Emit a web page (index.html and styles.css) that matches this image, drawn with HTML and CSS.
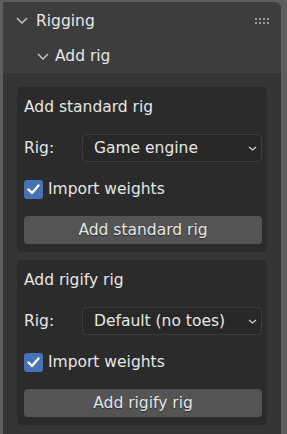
FILE: index.html
```html
<!DOCTYPE html>
<html>

<head>
    <title>Rigging</title>
    <meta charset="utf-8">
    <meta name="viewport" content="width=device-width, initial-scale=1">
    <link rel="stylesheet" href="styles.css">
</head>

<body>
<div class="panel">
    <!-- Panel header -->
    <div class="panel-head">
        <svg class="chev" width="12" height="7" viewBox="0 0 12 7"><path d="M1 1 L6 6 L11 1" fill="none" stroke="#c8c8c8" stroke-width="1.4"/></svg>
        <span class="head-title">Rigging</span>
        <svg class="grip" width="15" height="7" viewBox="0 0 15 7">
            <rect x="0" y="0" width="2" height="2"/><rect x="4" y="0" width="2" height="2"/><rect x="8" y="0" width="2" height="2"/><rect x="12" y="0" width="2" height="2"/>
            <rect x="0" y="4" width="2" height="2"/><rect x="4" y="4" width="2" height="2"/><rect x="8" y="4" width="2" height="2"/><rect x="12" y="4" width="2" height="2"/>
        </svg>
    </div>

    <!-- Sub panel -->
    <div class="sub-head">
        <svg class="chev" width="12" height="7" viewBox="0 0 12 7"><path d="M1 1 L6 6 L11 1" fill="none" stroke="#c8c8c8" stroke-width="1.4"/></svg>
        <span>Add rig</span>
    </div>

    <div class="sub-body">
        <div class="box">
            <div class="box-title">Add standard rig</div>
            <div class="prop-row">
                <span class="prop-label">Rig:</span>
                <div class="dropdown">
                    <span>Game engine</span>
                    <svg class="drop-arrow" width="9" height="5" viewBox="0 0 9 5"><path d="M1 1 L4.5 4 L8 1" fill="none" stroke="#d0d0d0" stroke-width="1.3"/></svg>
                </div>
            </div>
            <div class="check-row">
                <span class="checkbox"><svg width="19" height="19" viewBox="0 0 19 19"><path d="M4.5 9.5 L8 13 L14.5 5.5" fill="none" stroke="#fff" stroke-width="2.4" stroke-linecap="round" stroke-linejoin="round"/></svg></span>
                <span>Import weights</span>
            </div>
            <div class="button">Add standard rig</div>
        </div>

        <div class="box">
            <div class="box-title">Add rigify rig</div>
            <div class="prop-row">
                <span class="prop-label">Rig:</span>
                <div class="dropdown">
                    <span>Default (no toes)</span>
                    <svg class="drop-arrow" width="9" height="5" viewBox="0 0 9 5"><path d="M1 1 L4.5 4 L8 1" fill="none" stroke="#d0d0d0" stroke-width="1.3"/></svg>
                </div>
            </div>
            <div class="check-row">
                <span class="checkbox"><svg width="19" height="19" viewBox="0 0 19 19"><path d="M4.5 9.5 L8 13 L14.5 5.5" fill="none" stroke="#fff" stroke-width="2.4" stroke-linecap="round" stroke-linejoin="round"/></svg></span>
                <span>Import weights</span>
            </div>
            <div class="button">Add rigify rig</div>
        </div>
    </div>
</div>
</body>

</html>
```

FILE: styles.css
```css
body {
    margin: 0;
    background-color: #5e5e5e;
    font-family: "DejaVu Sans", sans-serif;
    font-size: 15.5px;
    color: #e6e6e6;
    height: 434px;
    overflow: hidden;
}

.panel {
    margin: 2px 6px 0 3px;
    background-color: #3d3d3d;
    border-top-right-radius: 6px;
    height: 432px;
    display: flex;
    flex-direction: column;
}

.panel-head {
    height: 37px;
    display: flex;
    align-items: center;
    padding-left: 13px;
    padding-right: 11px;
}

.chev {
    flex: none;
}

.head-title {
    margin-left: 8px;
    flex: 1;
}

.grip {
    fill: #9a9a9a;
    margin-top: 1px;
}

.sub-head {
    height: 34px;
    display: flex;
    align-items: center;
    padding-left: 34px;
    gap: 6px;
}

.sub-body {
    flex: 1;
    background-color: #353535;
    padding: 14px 14px 0 14px;
    display: flex;
    flex-direction: column;
    gap: 8px;
}

.box {
    background-color: #2b2b2b;
    border-radius: 5px;
    padding: 0 5px 8px 7px;
}

.box-title {
    height: 40px;
    line-height: 40px;
}

.prop-row {
    margin-top: 7px;
    height: 28px;
    display: flex;
    align-items: center;
}

.prop-label {
    width: 58px;
}

.dropdown {
    flex: 1;
    height: 28px;
    box-sizing: border-box;
    border: 1px solid #3b3b3b;
    border-radius: 4px;
    background-color: #282828;
    display: flex;
    align-items: center;
    padding: 0 4px 0 11px;
}

.dropdown span {
    flex: 1;
}

.check-row {
    height: 54px;
    display: flex;
    align-items: center;
    gap: 5px;
}

.checkbox {
    width: 19px;
    height: 19px;
    border-radius: 3px;
    background-color: #4772b3;
    display: block;
}

.checkbox svg {
    display: block;
}

.button {
    height: 28px;
    line-height: 28px;
    border-radius: 4px;
    background-color: #545454;
    text-align: center;
    text-shadow: 0 1px 1px #2a2a2a;
}
```
